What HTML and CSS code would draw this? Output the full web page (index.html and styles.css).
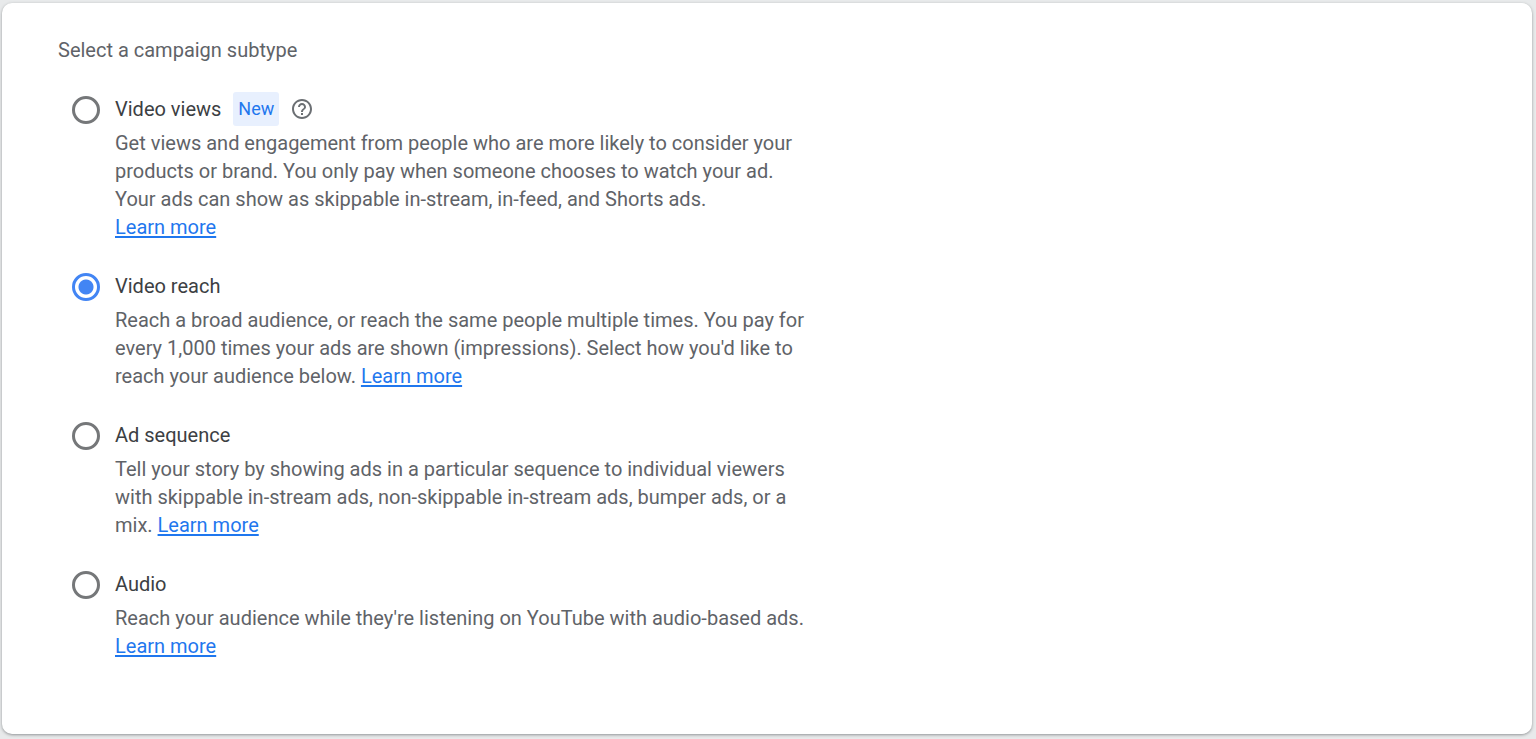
FILE: index.html
```html
<!DOCTYPE html>
<html lang="en">
<head>
    <meta charset="UTF-8">
    <meta name="viewport" content="width=device-width, initial-scale=1.0">
    <title>Select a campaign subtype</title>

    <link rel="stylesheet" href="styles.css">
</head>
<body>
    <form class="card">
        <h1 id="subtype-title">Select a campaign subtype</h1>

        <div class="options" role="radiogroup" aria-labelledby="subtype-title">
            <div class="option">
                <input type="radio" name="subtype" id="views">
                <div class="text">
                    <div class="heading">
                        <label for="views">Video views</label>
                        <span class="badge">New</span>
                        <button type="button" class="help" aria-label="Help">
                            <svg viewBox="0 0 24 24" fill="currentColor"><path d="M11 18h2v-2h-2v2zm1-16C6.480 2 2 6.480 2 12s4.480 10 10 10 10-4.480 10-10S17.520 2 12 2zm0 18c-4.410 0-8-3.590-8-8s3.590-8 8-8 8 3.590 8 8-3.590 8-8 8zm0-14c-2.210 0-4 1.790-4 4h2c0-1.100.9-2 2-2s2 .9 2 2c0 2-3 1.750-3 5h2c0-2.250 3-2.500 3-5 0-2.210-1.790-4-4-4z"/></svg>
                        </button>
                    </div>
                    <p>Get views and engagement from people who are more likely to consider your<br>
                    products or brand. You only pay when someone chooses to watch your ad.<br>
                    Your ads can show as skippable in-stream, in-feed, and Shorts ads.<br>
                    <a href="#">Learn more</a></p>
                </div>
            </div>

            <div class="option">
                <input type="radio" name="subtype" id="reach" checked>
                <div class="text">
                    <div class="heading">
                        <label for="reach">Video reach</label>
                    </div>
                    <p>Reach a broad audience, or reach the same people multiple times. You pay for<br>
                    every 1,000 times your ads are shown (impressions). Select how you'd like to<br>
                    reach your audience below. <a href="#">Learn more</a></p>
                </div>
            </div>

            <div class="option">
                <input type="radio" name="subtype" id="sequence">
                <div class="text">
                    <div class="heading">
                        <label for="sequence">Ad sequence</label>
                    </div>
                    <p>Tell your story by showing ads in a particular sequence to individual viewers<br>
                    with skippable in-stream ads, non-skippable in-stream ads, bumper ads, or a<br>
                    mix. <a href="#">Learn more</a></p>
                </div>
            </div>

            <div class="option">
                <input type="radio" name="subtype" id="audio">
                <div class="text">
                    <div class="heading">
                        <label for="audio">Audio</label>
                    </div>
                    <p>Reach your audience while they're listening on YouTube with audio-based ads.<br>
                    <a href="#">Learn more</a></p>
                </div>
            </div>
        </div>
    </form>
</body>
</html>
```
FILE: styles.css
```css
*{
    margin: 0;
    padding: 0;
    box-sizing: border-box;
}

body{
    background-color: #e8eaeb;
    font-family: Roboto, sans-serif;
    font-size: 20px;
    line-height: 28px;
    color: #5f6368;
    padding: 3px 4px 5px 2px;
}

.card{
    background: #fff;
    border-radius: 10px;
    box-shadow: 0 1px 3px rgba(60, 64, 67, 0.5);
    padding: 33px 56px 74px;
}

h1{
    font-size: 20px;
    font-weight: 400;
}

.options{
    display: flex;
    flex-direction: column;
    gap: 28px;
    margin-top: 28px;
    padding-left: 14px;
}

.option{
    display: flex;
    align-items: flex-start;
    gap: 15px;
}

.option input{
    appearance: none;
    flex: none;
    width: 28px;
    height: 28px;
    margin-top: 4px;
    border: 3px solid #757779;
    border-radius: 50%;
    cursor: pointer;
}

.option input:checked{
    border-color: #4285f4;
    background: radial-gradient(circle, #4285f4 7px, #fff 8px);
}

.text{
    max-width: 720px;
}

.heading{
    display: flex;
    align-items: center;
    height: 34px;
    margin-bottom: 3px;
    color: #3c4043;
}

.badge{
    background: #e8f0fe;
    border-radius: 3px;
    color: #1f77ee;
    font-size: 18px;
    line-height: 34px;
    padding: 0 5px;
    margin-left: 12px;
}

.help{
    border: 0;
    background: none;
    width: 24px;
    height: 24px;
    margin-left: 11px;
    color: #6b6f73;
    cursor: pointer;
}

.help svg{
    display: block;
}

a{
    color: #1f77ee;
    text-underline-offset: 2px;
}
```
